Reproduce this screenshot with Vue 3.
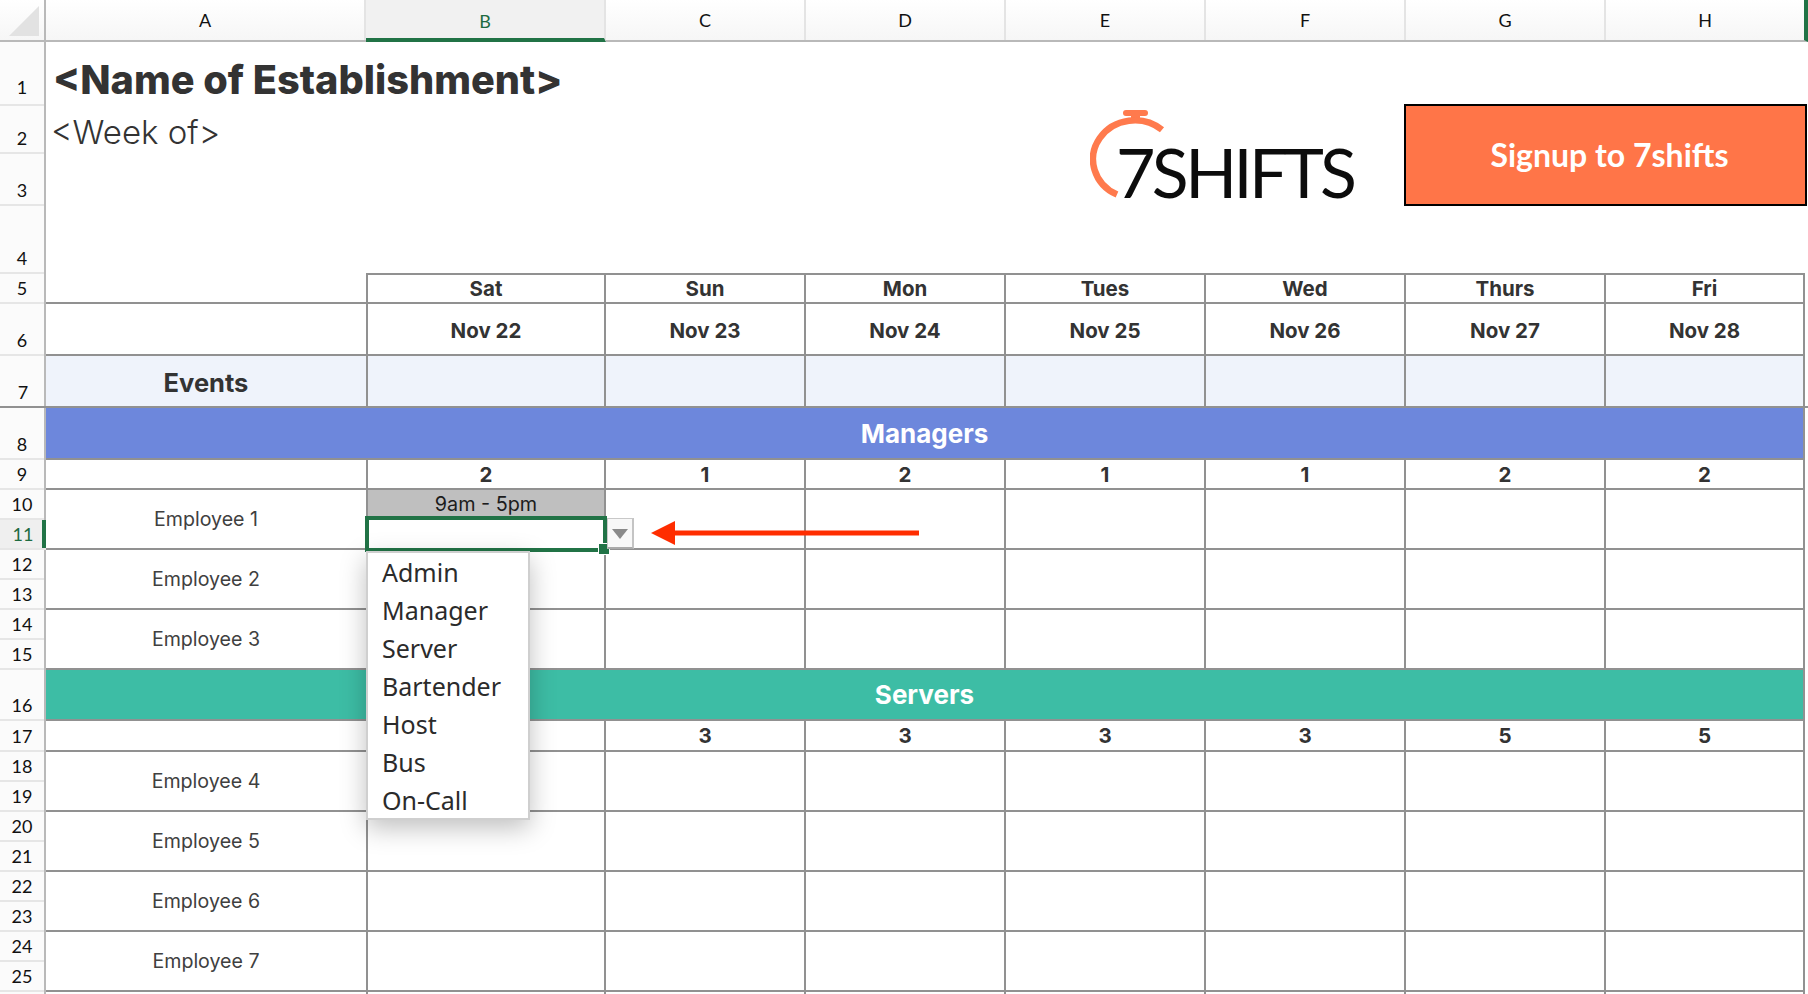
<script setup>
const cols = ['A', 'B', 'C', 'D', 'E', 'F', 'G', 'H']
const rowHeights = [64, 48, 52, 68, 30, 52, 52, 52, 30, 30, 30, 30, 30, 30, 30, 51, 31, 30, 30, 30, 30, 30, 30, 30, 30]
const nums = rowHeights.map((h, i) => ({ n: i + 1, h }))
const days = ['Sat', 'Sun', 'Mon', 'Tues', 'Wed', 'Thurs', 'Fri']
const dates = ['Nov 22', 'Nov 23', 'Nov 24', 'Nov 25', 'Nov 26', 'Nov 27', 'Nov 28']
const managerCounts = [2, 1, 2, 1, 1, 2, 2]
const serverCounts = ['', 3, 3, 3, 3, 5, 5]
const blanks = [1, 2, 3, 4, 5, 6, 7]
const managers = ['Employee 1', 'Employee 2', 'Employee 3']
const servers = ['Employee 4', 'Employee 5', 'Employee 6', 'Employee 7']
const roles = ['Admin', 'Manager', 'Server', 'Bartender', 'Host', 'Bus', 'On-Call']
</script>

<template>
  <div class="page">
    <div class="colhead">
      <div class="corner"><span class="tri"></span></div>
      <div v-for="c in cols" :key="c" class="colname" :class="{ active: c === 'B', wide: c === 'A', mid: c === 'B' }">{{ c }}</div>
    </div>
    <div class="body">
      <div class="nums">
        <div v-for="r in nums" :key="r.n" class="num" :class="{ cur: r.n === 11, frozen: r.n === 7 }" :style="{ height: r.h + 'px' }">{{ r.n }}</div>
        <div class="num last"></div>
      </div>
      <div class="sheet">
        <div class="banner">
          <div class="titles">
            <div class="title">&lt;Name of Establishment&gt;</div>
            <div class="week">&lt;Week of&gt;</div>
          </div>
          <div class="logo">
            <svg class="mark" width="90" height="95" viewBox="0 0 90 95">
              <rect x="33" y="0" width="25" height="6" rx="3" fill="#ff7a4d" />
              <rect x="41" y="4" width="9" height="6" fill="#ff7a4d" />
              <path d="M72 19.8 A41.7 39 0 1 0 27 84.6" fill="none" stroke="#ff7a4d" stroke-width="6.5" />
            </svg>
            <span class="wordmark">7SHIFTS</span>
          </div>
          <div class="cta">Signup to 7shifts</div>
        </div>

        <div class="row h30 top-line">
          <div class="a noline"></div>
          <div v-for="d in days" :key="d" class="c bold">{{ d }}</div>
        </div>
        <div class="row h52">
          <div class="a"></div>
          <div v-for="d in dates" :key="d" class="c bold date">{{ d }}</div>
        </div>
        <div class="row h52 events">
          <div class="a evname">Events</div>
          <div v-for="b in blanks" :key="b" class="c"></div>
        </div>
        <div class="band managers">Managers</div>
        <div class="row h30">
          <div class="a"></div>
          <div v-for="(n, i) in managerCounts" :key="i" class="c bold">{{ n }}</div>
        </div>
        <div v-for="(e, i) in managers" :key="e" class="row h60">
          <div class="a emp">{{ e }}</div>
          <div v-for="b in blanks" :key="b" class="c">
            <div v-if="i === 0 && b === 1" class="shift">9am - 5pm</div>
          </div>
        </div>
        <div class="band servers">Servers</div>
        <div class="row h31">
          <div class="a"></div>
          <div v-for="(n, i) in serverCounts" :key="i" class="c bold">{{ n }}</div>
        </div>
        <div v-for="e in servers" :key="e" class="row h60">
          <div class="a emp">{{ e }}</div>
          <div v-for="b in blanks" :key="b" class="c"></div>
        </div>
        <div class="row tail">
          <div class="a noline"></div>
          <div v-for="b in blanks" :key="b" class="c"></div>
        </div>
      </div>
    </div>

    <div class="selected"><span class="handle"></span></div>
    <div class="dd-btn"><span class="dd-tri"></span></div>
    <svg class="arrow" width="270" height="26" viewBox="0 0 270 26">
      <polygon points="0,13 24,1 24,25" fill="#ff2d00" />
      <rect x="22" y="10.5" width="246" height="5" fill="#ff2d00" />
    </svg>
    <ul class="menu">
      <li v-for="r in roles" :key="r">{{ r }}</li>
    </ul>
  </div>
</template>

<style scoped>
.page {
  position: relative;
  width: 1808px;
  height: 994px;
  overflow: hidden;
  background: #fff;
  font-family: Inter, Lato, sans-serif;
  color: #333;
}
.colhead {
  display: flex;
  height: 42px;
  box-sizing: border-box;
  border-bottom: 2px solid #b9b9b9;
  background: linear-gradient(#ffffff, #f6f6f6);
  border-right: 4px solid #217346;
  font-family: Lato, sans-serif;
}
.corner {
  position: relative;
  width: 46px;
  flex: none;
  box-sizing: border-box;
  border-right: 2px solid #b9b9b9;
}
.tri {
  position: absolute;
  left: 9px;
  top: 6px;
  width: 30px;
  height: 30px;
  background: #e2e2e2;
  clip-path: polygon(100% 0, 100% 100%, 0 100%);
}
.colname {
  width: 200px;
  flex: none;
  box-sizing: border-box;
  border-right: 2px solid #e4e4e4;
  display: flex;
  align-items: center;
  justify-content: center;
  font-size: 18px;
  color: #111;
}
.colname:last-child {
  border-right: 0;
  width: 198px;
}
.colname.wide { width: 320px; }
.colname.mid { width: 240px; }
.colname.active {
  background: #f1f1f1;
  color: #1e6b41;
  height: 42px;
  border-bottom: 4px solid #217346;
  padding-top: 4px;
}
.body {
  display: flex;
}
.nums {
  width: 46px;
  flex: none;
  box-sizing: border-box;
  border-right: 2px solid #b9b9b9;
  background: #fbfbfb;
  font-family: Lato, sans-serif;
}
.num {
  box-sizing: border-box;
  display: flex;
  align-items: flex-end;
  justify-content: center;
  padding-bottom: 2px;
  border-bottom: 2px solid #e6e6e6;
  font-size: 18px;
  line-height: 24px;
  color: #111;
}
.num:first-child { padding-bottom: 5px; }
.num.cur {
  color: #1e6b41;
  background: #efefef;
  box-shadow: inset -4px 0 0 #217346;
  margin-right: -2px;
}
.num.frozen { border-bottom-color: #919191; margin-right: -2px; }
.num.last { height: 10px; border: 0; }
.sheet {
  flex: 1;
  min-width: 0;
}
.banner {
  height: 231px;
  display: flex;
  align-items: flex-start;
}
.titles {
  width: 1030px;
  flex: none;
}
.title {
  font-size: 39.7px;
  font-weight: 800;
  line-height: 48px;
  margin: 14px 0 0 7px;
  white-space: nowrap;
}
.week {
  font-size: 33px;
  font-weight: 300;
  line-height: 40px;
  margin: 8px 0 0 5px;
}
.logo {
  position: relative;
  width: 290px;
  height: 110px;
  flex: none;
  margin: 68px 0 0 0;
}
.mark {
  position: absolute;
  left: 14px;
  top: 0;
}
.wordmark {
  position: absolute;
  left: 40px;
  top: 20px;
  font-family: Lato, sans-serif;
  font-size: 68px;
  line-height: 84px;
  color: #0c0c0c;
  letter-spacing: -3.6px;
}
.cta {
  width: 403px;
  height: 102px;
  flex: none;
  margin: 62px 0 0 38px;
  box-sizing: border-box;
  border: 2.5px solid #000;
  background: #ff7548;
  color: #fff;
  font-family: Lato, sans-serif;
  font-size: 32px;
  font-weight: 700;
  display: flex;
  align-items: center;
  justify-content: center;
  padding: 0 0 2px 8px;
}
.row {
  display: grid;
  grid-template-columns: 320px 238px repeat(5, 200px) 201px;
  width: 1759px;
  box-sizing: border-box;
  border-bottom: 2px solid #919191;
}
.top-line .c { border-top: 2px solid #919191; }
.top-line { height: 31px !important; }
.noline { border: 0; }
.h30 { height: 30px; }
.h31 { height: 31px; }
.h52 { height: 52px; }
.h60 { height: 60px; }
.tail { height: 30px; border-bottom: 0; }
.a, .c {
  display: flex;
  align-items: center;
  justify-content: center;
  box-sizing: border-box;
  min-width: 0;
}
.c {
  border-left: 2px solid #919191;
  position: relative;
}
.c:last-child { border-right: 2px solid #919191; }
.bold {
  font-weight: 700;
  font-size: 20.5px;
}
.date { padding-top: 3px; }
.events { width: 1762px; grid-template-columns: 320px 238px repeat(5, 200px) 201px 3px; }
.events .a, .events .c { background: #eff3fb; }
.evname {
  font-size: 25.5px;
  font-weight: 700;
  padding-top: 2px;
}
.band {
  height: 52px;
  width: 1759px;
  box-sizing: border-box;
  border-bottom: 2px solid #919191;
  border-right: 2px solid #919191;
  display: flex;
  align-items: center;
  justify-content: center;
  color: #fff;
  font-size: 26px;
  font-weight: 700;
}
.managers { background: #6d87dc; }
.servers { background: #3dbda5; height: 51px; }
.emp {
  font-size: 19.6px;
  color: #404040;
}
.shift {
  position: absolute;
  left: 0;
  right: 0;
  top: 0;
  height: 29px;
  background: #bfbfbf;
  color: #1c1c1c;
  font-size: 19.8px;
  text-align: center;
  line-height: 29px;
}
.selected {
  position: absolute;
  left: 365px;
  top: 516px;
  width: 242px;
  height: 36px;
  box-sizing: border-box;
  border: 4px solid #217346;
  background: #fff;
}
.handle {
  position: absolute;
  right: -7px;
  bottom: -7px;
  width: 10px;
  height: 10px;
  background: #217346;
  border: 1px solid #fff;
  box-sizing: content-box;
}
.dd-btn {
  position: absolute;
  left: 607px;
  top: 518px;
  width: 27px;
  height: 31px;
  box-sizing: border-box;
  background: #f8f8f8;
  border: 1px solid #c8c8c8;
  border-bottom: 2px solid #aaa;
  border-right: 2px solid #c4c4c4;
}
.dd-tri {
  position: absolute;
  left: 4px;
  top: 10px;
  width: 0;
  height: 0;
  border-left: 8px solid transparent;
  border-right: 8px solid transparent;
  border-top: 10px solid #8a8a8a;
}
.arrow {
  position: absolute;
  left: 651px;
  top: 520px;
}
.menu {
  position: absolute;
  left: 366px;
  top: 551px;
  width: 164px;
  height: 269px;
  margin: 0;
  padding: 0 0 0 14px;
  box-sizing: border-box;
  list-style: none;
  background: #fff;
  border: 2px solid #cfcfcf;
  box-shadow: 0 8px 24px rgba(0, 0, 0, 0.25);
  font-family: "Noto Sans", Arial, sans-serif;
  font-size: 25px;
  color: #2b2b2b;
}
.menu li {
  height: 38px;
  line-height: 38px;
  white-space: nowrap;
}
</style>
